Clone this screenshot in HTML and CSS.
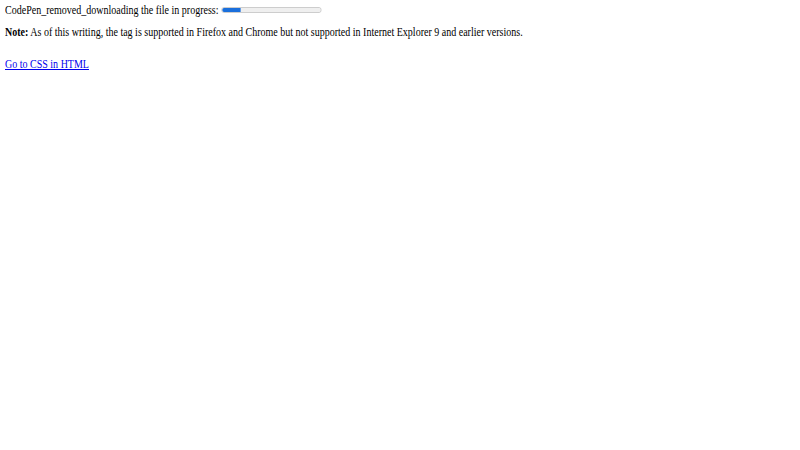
FILE: index.html
```html
<!DOCTYPE html>
<html>
<head>
<meta charset="utf-8">
<link rel="stylesheet" href="styles.css">
</head>
<body>
<div class="page">
<div class="line">CodePen_removed_downloading the file in progress: <progress class="bar" value="19" max="100"></progress></div>
<p class="note"><strong>Note:</strong> As of this writing, the tag is supported in Firefox and Chrome but not supported in Internet Explorer 9 and earlier versions.</p>
<p class="back"><a href="#">Go to CSS in HTML</a></p>
</div>
</body>
</html>
```
FILE: styles.css
```css
html, body { background: #fff; }
body {
  margin: 2px 0 0 5px;
  font-family: "Liberation Serif", "Times New Roman", serif;
  font-size: 13px;
  color: #000;
}
.page {
  transform: scaleX(0.77);
  transform-origin: 0 0;
}
.line { line-height: 15px; white-space: nowrap; }
.note { margin: 6.5px 0 0; line-height: 15px; white-space: nowrap; }
.back { margin: 17px 0 0; line-height: 15px; }
a { color: #0000ee; }
.bar {
  -webkit-appearance: none;
  appearance: none;
  box-sizing: border-box;
  width: 130px;
  height: 6px;
  vertical-align: 1px;
  border: 1px solid #c8c8c8;
  border-radius: 3px;
  background: #efefef;
  overflow: hidden;
}
.bar::-webkit-progress-bar {
  background: #efefef;
  border-radius: 3px;
}
.bar::-webkit-progress-value {
  background: #1a6fdc;
  border-radius: 3px 0 0 3px;
}
```
